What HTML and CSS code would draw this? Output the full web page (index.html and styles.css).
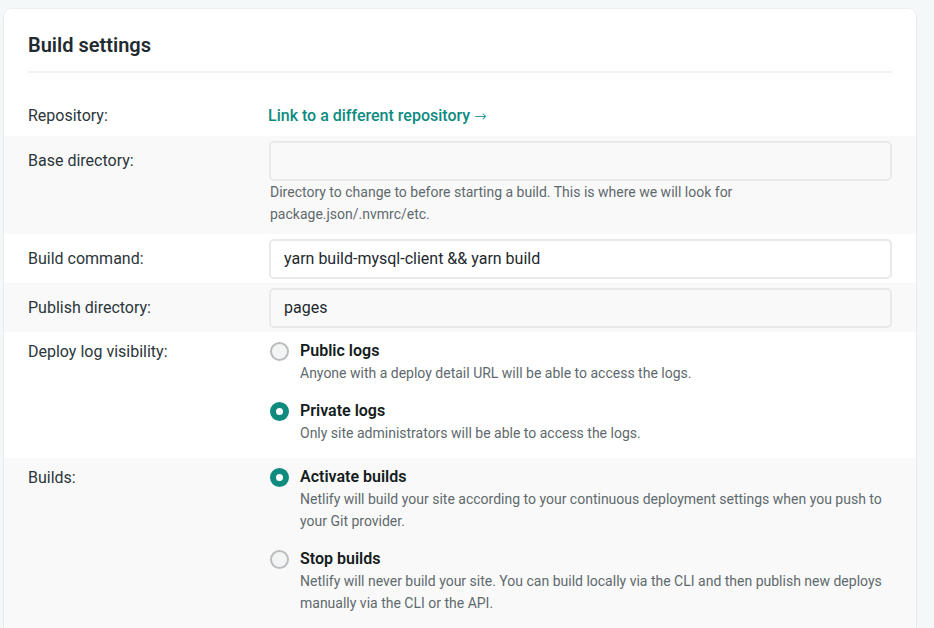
FILE: index.html
```html
<!DOCTYPE html>
<html lang="en">
<head>
<meta charset="utf-8">
<title>Build settings</title>
<link rel="stylesheet" href="styles.css">
</head>
<body>
<section class="card">
  <header class="card-head">
    <h2 class="card-title">Build settings</h2>
  </header>
  <div class="fields">
    <div class="row row--compact">
      <div class="label label--compact">Repository:</div>
      <div class="value value--compact"><a class="link" href="#">Link to a different repository <span class="arrow">→</span></a></div>
    </div>
    <div class="row row--alt">
      <div class="label">Base directory:</div>
      <div class="value">
        <div class="input"></div>
        <p class="help">Directory to change to before starting a build. This is where we will look for package.json/.nvmrc/etc.</p>
      </div>
    </div>
    <div class="row">
      <div class="label">Build command:</div>
      <div class="value"><div class="input">yarn build-mysql-client &amp;&amp; yarn build</div></div>
    </div>
    <div class="row row--alt">
      <div class="label">Publish directory:</div>
      <div class="value"><div class="input">pages</div></div>
    </div>
    <div class="row">
      <div class="label label--compact">Deploy log visibility:</div>
      <div class="value">
        <div class="options">
          <div class="option">
            <span class="radio"></span>
            <div class="option-text">
              <div class="option-title">Public logs</div>
              <div class="option-desc">Anyone with a deploy detail URL will be able to access the logs.</div>
            </div>
          </div>
          <div class="option">
            <span class="radio radio--on"></span>
            <div class="option-text">
              <div class="option-title">Private logs</div>
              <div class="option-desc">Only site administrators will be able to access the logs.</div>
            </div>
          </div>
        </div>
      </div>
    </div>
    <div class="row row--alt">
      <div class="label label--compact">Builds:</div>
      <div class="value">
        <div class="options">
          <div class="option">
            <span class="radio radio--on"></span>
            <div class="option-text">
              <div class="option-title">Activate builds</div>
              <div class="option-desc">Netlify will build your site according to your continuous deployment settings when you push to your Git provider.</div>
            </div>
          </div>
          <div class="option">
            <span class="radio"></span>
            <div class="option-text">
              <div class="option-title">Stop builds</div>
              <div class="option-desc">Netlify will never build your site. You can build locally via the CLI and then publish new deploys manually via the CLI or the API.</div>
            </div>
          </div>
        </div>
      </div>
    </div>
  </div>
</section>
</body>
</html>
```
FILE: styles.css
```css
* { box-sizing: border-box; }
html, body { margin: 0; }
body {
  background: #f4f8f9;
  font-family: Roboto, "Liberation Sans", Arial, sans-serif;
  color: #2c3a40;
  padding: 9px 18px 0 4px;
  height: 628px;
  overflow: hidden;
}
.card {
  background: #ffffff;
  border-radius: 8px;
  box-shadow: 0 0 0 1px rgba(30, 60, 70, 0.04), 0 1px 3px rgba(30, 60, 70, 0.05);
  padding-bottom: 40px;
}
.card-head {
  padding: 24px 24px 0;
}
.card-title {
  margin: 0;
  font-size: 20px;
  line-height: 24px;
  font-weight: 600;
  color: #1f2b31;
  padding-bottom: 14px;
  border-bottom: 2px solid #f1f3f3;
}
.fields {
  padding-top: 24px;
}
.row {
  display: flex;
  padding: 5px 24px 4px;
}
.row--compact { padding: 4px 24px 5px; }
.row--alt { background: #f9f9f9; }
.label {
  width: 241px;
  flex: none;
  font-size: 16px;
  line-height: 40px;
  color: #2b363b;
}
.label--compact { line-height: 30px; }
.value {
  flex: 1;
  min-width: 0;
}
.value--compact { line-height: 30px; }
.link {
  color: #0d8b7f;
  font-weight: 500;
  font-size: 16px;
  text-decoration: none;
  margin-left: -1px;
}
.arrow {
  font-family: "DejaVu Sans", sans-serif;
  font-weight: 200;
  font-size: 15px;
}
.input {
  height: 40px;
  border: 2px solid #e9e9e9;
  border-radius: 5px;
  padding: 0 13px;
  font-size: 16px;
  line-height: 36px;
  color: #1e292e;
}
.help {
  margin: 0;
  padding: 0 1px 5px;
  font-size: 14px;
  line-height: 22px;
  color: #60696d;
  max-width: 480px;
}
.options {
  display: flex;
  flex-direction: column;
  gap: 16px;
  padding: 3px 0 10px;
}
.option {
  display: flex;
  align-items: flex-start;
  gap: 11px;
}
.radio {
  flex: none;
  width: 19px;
  height: 19px;
  margin: 2px 0 0 1px;
  border-radius: 50%;
  border: 2px solid #b9bdbf;
  background: #f3f4f4;
}
.radio--on {
  border: 6px solid #0f8a7e;
  background: #ffffff;
}
.option-text { min-width: 0; }
.option-title {
  font-size: 16px;
  line-height: 22px;
  font-weight: 600;
  color: #141c20;
}
.option-desc {
  font-size: 14px;
  line-height: 22px;
  color: #60696d;
  max-width: 590px;
}
```
